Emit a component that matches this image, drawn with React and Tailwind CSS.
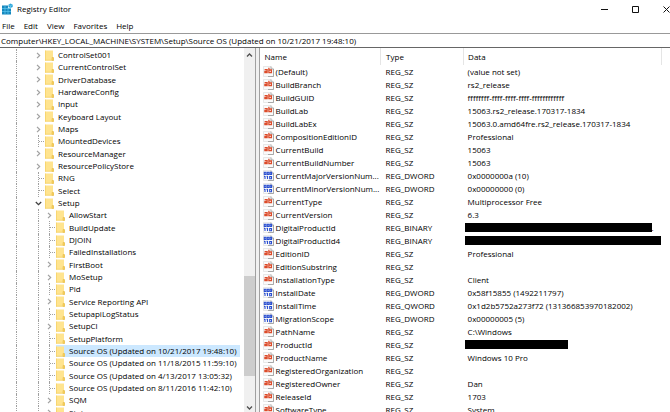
import React, { useState } from "react";

const topKeys = [
  { name: "ControlSet001", children: true },
  { name: "CurrentControlSet", children: true },
  { name: "DriverDatabase", children: true },
  { name: "HardwareConfig", children: true },
  { name: "Input", children: true },
  { name: "Keyboard Layout", children: true },
  { name: "Maps", children: true },
  { name: "MountedDevices" },
  { name: "ResourceManager", children: true },
  { name: "ResourcePolicyStore", children: true },
  { name: "RNG" },
  { name: "Select" },
  { name: "Setup", children: true, open: true },
];

const setupKeys = [
  { name: "AllowStart", children: true },
  { name: "BuildUpdate" },
  { name: "DJOIN" },
  { name: "FailedInstallations" },
  { name: "FirstBoot", children: true },
  { name: "MoSetup", children: true },
  { name: "Pid" },
  { name: "Service Reporting API", children: true },
  { name: "SetupapiLogStatus" },
  { name: "SetupCl", children: true },
  { name: "SetupPlatform" },
  { name: "Source OS (Updated on 10/21/2017 19:48:10)" },
  { name: "Source OS (Updated on 11/18/2015 11:59:10)" },
  { name: "Source OS (Updated on 4/13/2017 13:05:32)" },
  { name: "Source OS (Updated on 8/11/2016 11:42:10)" },
  { name: "SQM", children: true },
  { name: "Status", children: true },
];

const treeRows = [
  ...topKeys.map((key) => ({ ...key, nested: false })),
  ...setupKeys.map((key) => ({ ...key, nested: true })),
];

const values = [
  { name: "(Default)", type: "REG_SZ", data: "(value not set)" },
  { name: "BuildBranch", type: "REG_SZ", data: "rs2_release" },
  { name: "BuildGUID", type: "REG_SZ", data: "ffffffff-ffff-ffff-ffff-ffffffffffff" },
  { name: "BuildLab", type: "REG_SZ", data: "15063.rs2_release.170317-1834" },
  { name: "BuildLabEx", type: "REG_SZ", data: "15063.0.amd64fre.rs2_release.170317-1834" },
  { name: "CompositionEditionID", type: "REG_SZ", data: "Professional" },
  { name: "CurrentBuild", type: "REG_SZ", data: "15063" },
  { name: "CurrentBuildNumber", type: "REG_SZ", data: "15063" },
  { name: "CurrentMajorVersionNum...", type: "REG_DWORD", data: "0x0000000a (10)" },
  { name: "CurrentMinorVersionNum...", type: "REG_DWORD", data: "0x00000000 (0)" },
  { name: "CurrentType", type: "REG_SZ", data: "Multiprocessor Free" },
  { name: "CurrentVersion", type: "REG_SZ", data: "6.3" },
  { name: "DigitalProductId", type: "REG_BINARY", hidden: "w-[187px]", data: "." },
  { name: "DigitalProductId4", type: "REG_BINARY", hidden: "w-[196px]" },
  { name: "EditionID", type: "REG_SZ", data: "Professional" },
  { name: "EditionSubstring", type: "REG_SZ", data: "" },
  { name: "InstallationType", type: "REG_SZ", data: "Client" },
  { name: "InstallDate", type: "REG_DWORD", data: "0x58f15855 (1492211797)" },
  { name: "InstallTime", type: "REG_QWORD", data: "0x1d2b5752a273f72 (131366853970182002)" },
  { name: "MigrationScope", type: "REG_DWORD", data: "0x00000005 (5)" },
  { name: "PathName", type: "REG_SZ", data: "C:\\Windows" },
  { name: "ProductId", type: "REG_SZ", hidden: "w-[103px]" },
  { name: "ProductName", type: "REG_SZ", data: "Windows 10 Pro" },
  { name: "RegisteredOrganization", type: "REG_SZ", data: "" },
  { name: "RegisteredOwner", type: "REG_SZ", data: "Dan" },
  { name: "ReleaseId", type: "REG_SZ", data: "1703" },
  { name: "SoftwareType", type: "REG_SZ", data: "System" },
];

function RegeditIcon() {
  return (
    <svg width="11" height="12" viewBox="0 0 11 12" className="shrink-0">
      <path d="M0 2.5h6v3h3v6H0z" fill="#1687bd" />
      <path d="M0 5.5h9M0 8.5h9M3 2.5v9M6 4.5v7" stroke="#5cc6ee" strokeWidth="0.7" />
      <path d="M8.5 0.5l2.2 1.2v2.2L8.5 5 6.5 3.9V1.7z" fill="#2aa3d8" />
      <path d="M6.5 1.7l2 1.1 2.2-1.1M8.5 2.8V5" fill="none" stroke="#8bdcf8" strokeWidth="0.5" />
    </svg>
  );
}

function FolderIcon() {
  return (
    <svg width="9" height="11" viewBox="0 0 9 11" className="shrink-0">
      <path d="M0 0.5h8v7.5h1v2.5H0z" fill="#ffe48f" />
      <path d="M0.4 0.5v10M0 10.2h7" stroke="#f3cf60" strokeWidth="0.7" />
      <path d="M7 7.5h1.6v3H7z" fill="#fbd25c" stroke="#dfb445" strokeWidth="0.5" />
    </svg>
  );
}

function Chevron({ open }) {
  return (
    <svg width="7" height="7" viewBox="0 0 7 7">
      {open ? (
        <path d="M0.8 2l2.7 2.7L6.2 2" fill="none" stroke="#404040" strokeWidth="1.3" />
      ) : (
        <path d="M2 0.8l2.7 2.7L2 6.2" fill="none" stroke="#a0a0a0" strokeWidth="1.2" />
      )}
    </svg>
  );
}

function ValueIcon({ binary }) {
  return (
    <svg width="11" height="11" viewBox="0 0 11 11" className="shrink-0">
      <path d="M0.5 0.5h7.5l2.5 2.5v7.5H0.5z" fill="#fafafa" stroke="#dadada" strokeWidth="0.6" />
      <path d="M8 0.5v2.5h2.5v7.5H5" fill="none" stroke="#8c8c8c" strokeWidth="0.7" />
      {binary ? (
        <g fill="none" stroke="#2a4fd0" strokeWidth="1.1">
          <path d="M1.3 2.3h1.6v2.2H1.3zM4.3 2.3h1.6v2.2H4.3zM7.2 2.3h1.4v2.2H7.2z" />
          <path d="M2 6v3M4.5 6v3M6.7 6.5h1.8v2.3H6.7zM1 6.4h1M3.6 6.4h1" />
        </g>
      ) : (
        <g fill="none" stroke="#dc4b2a" strokeWidth="1.3">
          <path d="M1.6 3.7h2.5v3.6M4.1 5.4H1.9v1.3h2.2" />
          <path d="M5.9 1.8v4.9h2.5V4H5.9" />
        </g>
      )}
    </svg>
  );
}

function TreeRow({ row, selected, onSelect }) {
  return (
    <li className="flex h-3 items-center nth-[3n]:h-[13px]">
      <span className="h-full w-[17px] shrink-0 border-r border-dotted border-[#a0a0a0]" />
      {row.nested && (
        <span className="h-full w-[22px] shrink-0 border-r border-dotted border-[#a0a0a0]" />
      )}
      <span className={row.nested ? "w-[7px] shrink-0" : "w-[18px] shrink-0"} />
      <span className="flex h-full w-[10px] shrink-0 items-center">
        {row.children ? (
          <Chevron open={row.open} />
        ) : (
          <span className="ml-[3px] flex h-full w-[6px] items-center border-l border-dotted border-[#a0a0a0]">
            <span className="w-full border-t border-dotted border-[#a0a0a0]" />
          </span>
        )}
      </span>
      <button
        type="button"
        onClick={onSelect}
        className={`flex h-full items-center gap-1 pr-[3px] whitespace-nowrap ${
          selected ? "bg-[#cce8ff]" : ""
        }`}
      >
        <FolderIcon />
        {row.name}
      </button>
    </li>
  );
}

function App() {
  const [selected, setSelected] = useState("Source OS (Updated on 10/21/2017 19:48:10)");
  const [address, setAddress] = useState(
    "Computer\\HKEY_LOCAL_MACHINE\\SYSTEM\\Setup\\Source OS (Updated on 10/21/2017 19:48:10)"
  );

  return (
    <div className="flex h-screen flex-col overflow-hidden bg-white font-['Open_Sans','Noto_Sans',sans-serif] text-[8px] leading-3 text-black">
      <header className="flex h-[18px] shrink-0 items-center pl-[2px]">
        <RegeditIcon />
        <h1 className="ml-1 flex-1">Registry Editor</h1>
        <div className="flex items-center gap-6">
          <button type="button" aria-label="Minimize">
            <svg width="7" height="7" viewBox="0 0 7 7">
              <path d="M0 3.5h7" stroke="#111" />
            </svg>
          </button>
          <button type="button" aria-label="Maximize">
            <svg width="7" height="7" viewBox="0 0 7 7">
              <path d="M0.5 0.5h6v6h-6z" fill="none" stroke="#111" />
            </svg>
          </button>
          <button type="button" aria-label="Close">
            <svg width="7" height="7" viewBox="0 0 7 7">
              <path d="M0.5 0.5l6 6M6.5 0.5l-6 6" stroke="#111" />
            </svg>
          </button>
        </div>
      </header>

      <nav className="flex h-[15px] shrink-0 items-center gap-[9px] pl-[2px]">
        <button type="button">File</button>
        <button type="button">Edit</button>
        <button type="button">View</button>
        <button type="button">Favorites</button>
        <button type="button">Help</button>
      </nav>

      <input
        aria-label="Address"
        value={address}
        onChange={(e) => setAddress(e.target.value)}
        className="h-[15px] w-full shrink-0 border-y border-t-[#999] border-b-[#666] pl-px outline-none"
      />

      <main className="flex min-h-0 flex-1">
        <section className="flex w-[38%] shrink-0">
          <ul className="min-w-0 flex-1 overflow-hidden pt-px">
            {treeRows.map((row) => (
              <TreeRow
                key={row.name}
                row={row}
                selected={row.name === selected}
                onSelect={() => setSelected(row.name)}
              />
            ))}
          </ul>
          <div className="flex w-[11px] shrink-0 flex-col items-center bg-[#f0f0f0]">
            <svg width="7" height="12" viewBox="0 0 7 12" className="my-px">
              <path d="M1 7.5L3.5 5 6 7.5" fill="none" stroke="#505050" strokeWidth="1.3" />
            </svg>
            <div className="grow-[213]" />
            <div className="w-full grow-[100] bg-[#cdcdcd]" />
            <div className="grow-[24]" />
            <svg width="7" height="12" viewBox="0 0 7 12">
              <path d="M1 6.5L3.5 9 6 6.5" fill="none" stroke="#505050" strokeWidth="1.3" />
            </svg>
          </div>
        </section>

        <div className="w-[5px] shrink-0 border-x border-[#a0a0a0] bg-[#f0f0f0]" />

        <section className="min-w-0 flex-1 overflow-hidden">
          <table className="w-full table-fixed border-collapse text-left">
            <thead>
              <tr className="h-[17px]">
                <th className="w-[121px] border-r border-[#e5e5e5] pl-[5px] font-normal">Name</th>
                <th className="w-[83px] border-r border-[#e5e5e5] pl-[5px] font-normal">Type</th>
                <th className="border-r border-[#e5e5e5] pl-1 font-normal">Data</th>
                <th className="w-[9px]" />
              </tr>
            </thead>
            <tbody>
              {values.map((item) => (
                <tr key={item.name} className="h-[13px] whitespace-nowrap">
                  <td className="pl-[3px]">
                    <span className="flex items-center gap-[2px]">
                      <ValueIcon binary={item.type !== "REG_SZ"} />
                      {item.name}
                    </span>
                  </td>
                  <td className="pl-[5px]">{item.type}</td>
                  <td className={item.hidden ? "pl-px" : "pl-1"}>
                    {item.hidden ? (
                      <span className="flex items-center">
                        <span className={`h-[9px] shrink-0 bg-black ${item.hidden}`} />
                        {item.data}
                      </span>
                    ) : (
                      item.data
                    )}
                  </td>
                </tr>
              ))}
            </tbody>
          </table>
        </section>
      </main>
    </div>
  );
}

export default App;
